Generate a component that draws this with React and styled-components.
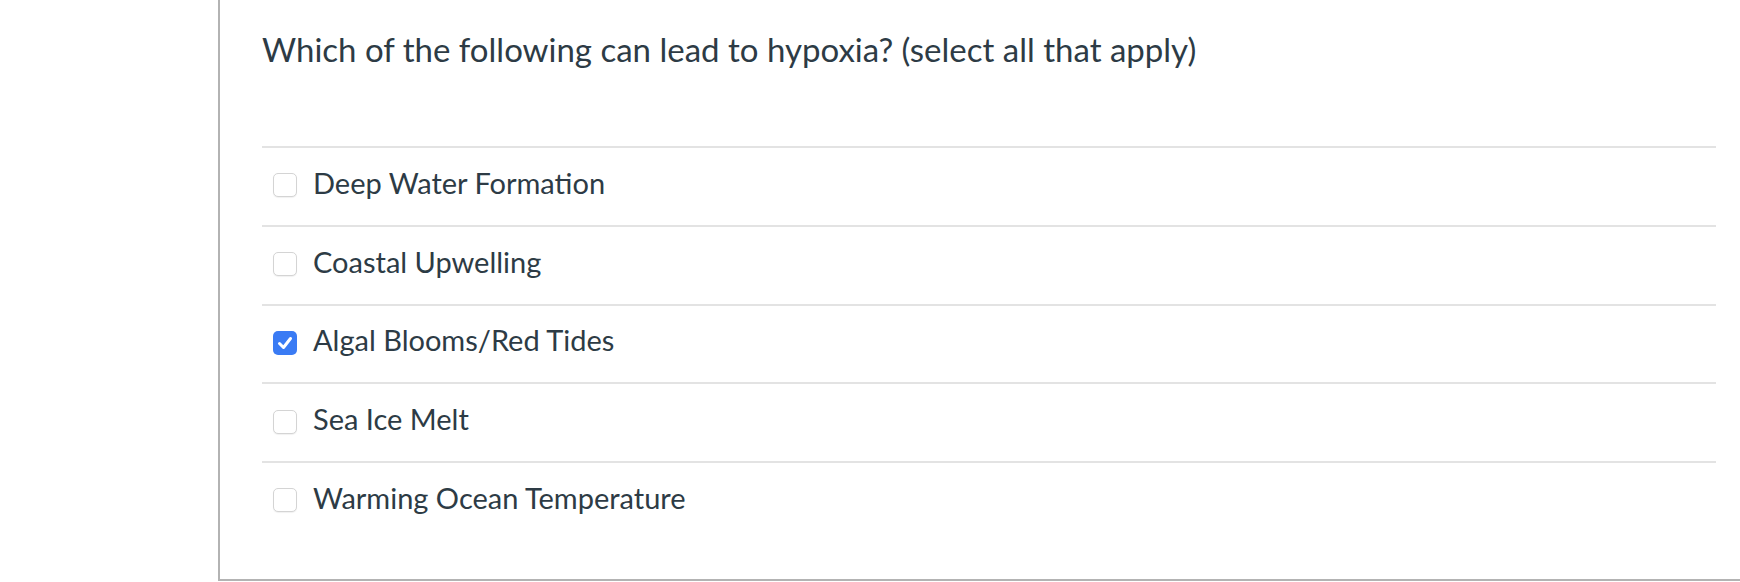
import React from "react";
import styled, { createGlobalStyle } from "styled-components";

const GlobalStyle = createGlobalStyle`
  html, body {
    margin: 0;
    padding: 0;
    background: #ffffff;
  }
  body {
    font-family: Lato, "Open Sans", sans-serif;
    color: #2d3b45;
  }
`;

const Page = styled.div`
  width: 1740px;
  height: 582px;
  overflow: hidden;
  padding-left: 218px;
  box-sizing: border-box;
`;

const Panel = styled.div`
  height: 581px;
  box-sizing: border-box;
  border-left: 2px solid #b3b3b3;
  border-bottom: 2px solid #b3b3b3;
  padding: 0 24px 0 42px;
  display: flex;
  flex-direction: column;
`;

const Question = styled.div`
  font-size: 33px;
  line-height: 48px;
  padding-top: 25px;
  height: 146px;
  box-sizing: border-box;
`;

const Answers = styled.div`
  display: flex;
  flex-direction: column;
`;

const Answer = styled.label`
  display: flex;
  align-items: center;
  height: 78.75px;
  box-sizing: border-box;
  border-top: 2px solid #e3e3e3;
  padding-left: 11px;
  padding-bottom: 2px;
  gap: 16px;
  font-size: 29px;
`;

const Label = styled.span`
  padding-bottom: 6px;
`;

const Box = styled.span`
  width: 24px;
  height: 24px;
  box-sizing: border-box;
  border-radius: 5px;
  border: ${(p) => (p.$checked ? "none" : "1.5px solid #d4d4d4")};
  background: ${(p) => (p.$checked ? "#3a7bf4" : "#ffffff")};
  box-shadow: ${(p) => (p.$checked ? "none" : "0 1px 1px rgba(0,0,0,0.06)")};
  display: flex;
  align-items: center;
  justify-content: center;
  flex-shrink: 0;
`;

const answers = [
  { text: "Deep Water Formation", checked: false },
  { text: "Coastal Upwelling", checked: false },
  { text: "Algal Blooms/Red Tides", checked: true },
  { text: "Sea Ice Melt", checked: false },
  { text: "Warming Ocean Temperature", checked: false },
];

function Checkbox({ checked }) {
  return (
    <Box $checked={checked}>
      {checked && (
        <svg width="18" height="18" viewBox="0 0 18 18">
          <path
            d="M3.5 9.5 L7.5 13.5 L14.5 4.5"
            fill="none"
            stroke="#ffffff"
            strokeWidth="3"
            strokeLinecap="round"
            strokeLinejoin="round"
          />
        </svg>
      )}
    </Box>
  );
}

export default function App() {
  return (
    <>
      <GlobalStyle />
      <Page>
        <Panel>
          <Question>Which of the following can lead to hypoxia? (select all that apply)</Question>
          <Answers>
            {answers.map((a) => (
              <Answer key={a.text}>
                <Checkbox checked={a.checked} />
                <Label>{a.text}</Label>
              </Answer>
            ))}
          </Answers>
        </Panel>
      </Page>
    </>
  );
}
